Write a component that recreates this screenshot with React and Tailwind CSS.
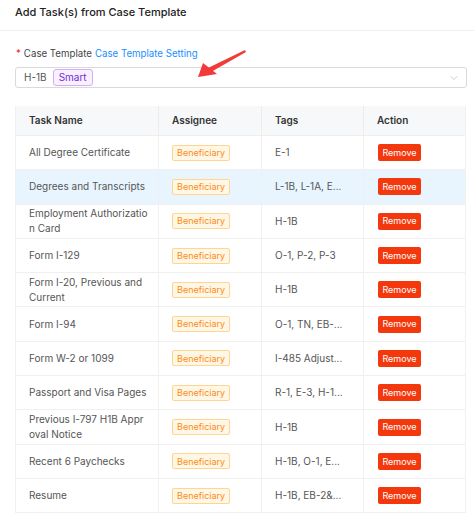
import React from 'react';
import { ChevronDown } from 'lucide-react';

const tasks = [
  { name: ['All Degree Certificate'], tags: 'E-1' },
  { name: ['Degrees and Transcripts'], tags: 'L-1B, L-1A, E...', active: true },
  { name: ['Employment Authorizatio', 'n Card'], tags: 'H-1B' },
  { name: ['Form I-129'], tags: 'O-1, P-2, P-3' },
  { name: ['Form I-20, Previous and', 'Current'], tags: 'H-1B' },
  { name: ['Form I-94'], tags: 'O-1, TN, EB-...' },
  { name: ['Form W-2 or 1099'], tags: 'I-485 Adjust...' },
  { name: ['Passport and Visa Pages'], tags: 'R-1, E-3, H-1...' },
  { name: ['Previous I-797 H1B Appr', 'oval Notice'], tags: 'H-1B' },
  { name: ['Recent 6 Paychecks'], tags: 'H-1B, O-1, E...' },
  { name: ['Resume'], tags: 'H-1B, EB-2&...' },
];

const App = () => {
  return (
    <div className="relative w-[474px] h-[517px] overflow-hidden bg-white font-['Inter','Liberation_Sans',sans-serif] text-[#333]">
      {/* Шапка */}
      <div className="h-[31px] border-b border-[#eeeeee] px-[15px] flex items-center">
        <h1 className="text-[11px] font-medium text-[#222] leading-none -mt-[5px]">Add Task(s) from Case Template</h1>
      </div>

      <div className="px-[15px] pt-[16px]">
        <div className="text-[9.7px] leading-[14px] flex items-center gap-[3px] pl-[1px]">
          <span className="text-[#f5222d]">*</span>
          <span className="text-[#444]">Case Template</span>
          <span className="text-[#1890ff]">Case Template Setting</span>
        </div>

        <div className="mt-[6px] h-[21px] w-[452px] border border-[#d9d9d9] rounded-[3px] flex items-center pl-[8px] pr-[6px]">
          <span className="text-[10px] text-[#555]">H-1B</span>
          <span className="ml-[6px] h-[17px] px-[5px] flex items-center text-[10px] text-[#722ed1] bg-[#f9f0ff] border border-[#d3adf7] rounded-[3px]">Smart</span>
          <ChevronDown size={12} className="ml-auto text-[#bbb]" strokeWidth={1.5} />
        </div>

        {/* Таблица */}
        <div className="mt-[18px] w-[451px] border-l border-r border-[#f0f0f0]">
          <div className="grid grid-cols-[143px_103px_102px_1fr] h-[30px] bg-[#f7f8fa] border-b border-[#eeeeee] text-[10px] font-semibold text-[#333]">
            <div className="pl-[13px] flex items-center border-r border-[#ececec]">Task Name</div>
            <div className="pl-[13px] flex items-center border-r border-[#ececec]">Assignee</div>
            <div className="pl-[13px] flex items-center border-r border-[#ececec]">Tags</div>
            <div className="pl-[13px] flex items-center">Action</div>
          </div>
          {tasks.map((t) => (
            <div
              key={t.name[0]}
              className={`grid grid-cols-[143px_103px_102px_1fr] h-[34.3px] border-b border-[#f0f0f0] text-[10px] ${t.active ? 'bg-[#e8f5ff]' : 'bg-white'}`}
            >
              <div className="pl-[13px] pr-[8px] flex flex-col justify-center border-r border-[#f0f0f0] text-[#555] leading-[15px] whitespace-nowrap">
                {t.name.map((line) => (
                  <span key={line}>{line}</span>
                ))}
              </div>
              <div className="pl-[13px] flex items-center border-r border-[#f0f0f0]">
                <span className="h-[16px] px-[4px] flex items-center text-[9px] text-[#fa8c16] bg-[#fff7e6] border border-[#ffd591] rounded-[2px]">Beneficiary</span>
              </div>
              <div className="pl-[13px] flex items-center border-r border-[#f0f0f0] text-[#555]">{t.tags}</div>
              <div className="pl-[14px] flex items-center">
                <button className="h-[17px] w-[43px] flex items-center justify-center text-[9px] text-white bg-[#f4380d] rounded-[2px]">Remove</button>
              </div>
            </div>
          ))}
        </div>
      </div>

      {/* Стрелка */}
      <svg className="absolute left-[190px] top-[42px]" width="62" height="40" viewBox="0 0 62 40">
        <path d="M55 8 L56 10 L21 30 L18 26 Z" fill="#f23a3a" />
        <path d="M8 35 L13 21 L27 32 Z" fill="#f23a3a" />
      </svg>
    </div>
  );
};

export default App;
